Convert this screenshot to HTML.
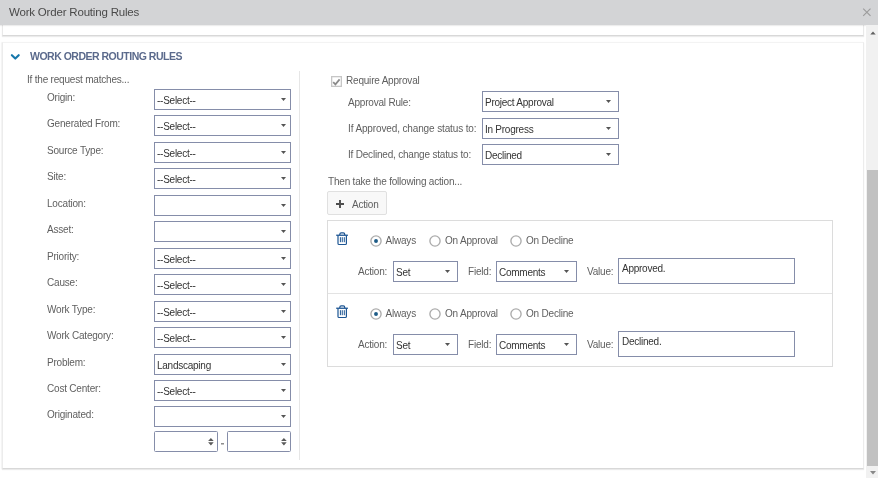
<!DOCTYPE html>
<html><head><meta charset="utf-8"><style>
*{box-sizing:border-box;margin:0;padding:0}
html,body{width:878px;height:478px;overflow:hidden;background:#fff;will-change:transform;font-family:"Liberation Sans",sans-serif;color:#555}
.a{position:absolute;white-space:nowrap;line-height:1}
#hdr{position:absolute;left:0;top:0;width:878px;height:25px;background:#d3d4d6;box-shadow:0 1px 1px rgba(0,0,0,.07)}
#ttl{left:9px;top:7px;font-size:11.5px;color:#4a4a4a;letter-spacing:-0.19px}
#p1{position:absolute;left:2px;top:-10px;width:862px;height:46px;border:1px solid #e9e9e9;border-bottom:1px solid #d8d8d8;background:#fff;box-shadow:0 1px 1px rgba(0,0,0,.08)}
#p2{position:absolute;left:2px;top:42px;width:862px;height:427px;border:1px solid #ececec;border-top-color:#f3f3f3;border-bottom:1px solid #d8d8d8;background:#fff;box-shadow:0 1px 1px rgba(0,0,0,.08),-1px 0 1px rgba(0,0,0,.03)}
#sb{position:absolute;left:866px;top:25px;width:12px;height:453px;background:#f1f1f1}
#thumb{position:absolute;left:867px;top:170px;width:11px;height:296px;background:#c1c1c1}
.lbl{font-size:10px;color:#5f5f5f;letter-spacing:-0.2px}
.sel{position:absolute;height:21px;border:1px solid #858da9;background:#fff}
.sel .t{position:absolute;left:2px;top:6px;font-size:10px;line-height:1;color:#333;letter-spacing:-0.25px;white-space:nowrap}
.sel .ar{position:absolute;right:7px;top:8px;width:5px;height:3px;background:#555;clip-path:polygon(0 0,100% 0,50% 100%)}
.l .ar{right:4px}
.spin{position:absolute;right:4px;top:6px;width:6px;height:8px}
.spin:before{content:"";position:absolute;left:0;top:0;border-left:3px solid transparent;border-right:3px solid transparent;border-bottom:3px solid #666}
.spin:after{content:"";position:absolute;left:0;top:4px;border-left:3px solid transparent;border-right:3px solid transparent;border-top:3px solid #666}
#div{position:absolute;left:299px;top:71px;width:1px;height:389px;background:#e6e6e6}
.box{position:absolute;border:1px solid #dcdcdc;background:#fff}
svg{position:absolute}
</style></head><body>
<div id="p1"></div><div id="hdr"></div>
<div class="a" id="ttl">Work Order Routing Rules</div>
<svg style="left:862px;top:7px" width="10" height="10" viewBox="0 0 10 10"><path d="M1.2 1.6L8.5 8.8M8.5 1.6L1.2 8.8" stroke="#9c9c9c" stroke-width="1.15"/></svg>
<div id="p2"></div><div id="sb"></div><div id="thumb"></div>
<svg style="left:870px;top:31px" width="6" height="4"><path d="M0.3 3.6L3 0.6L5.7 3.6Z" fill="#606060"/></svg>
<svg style="left:870px;top:471px" width="6" height="4"><path d="M0 0L6 0L3 3.5Z" fill="#888"/></svg>
<svg style="left:10px;top:53px" width="10" height="8" viewBox="0 0 10 8"><path d="M1.9 2.2L5.3 5.6L8.7 2.2" stroke="#1677ab" stroke-width="2.1" stroke-linecap="round" stroke-linejoin="round" fill="none"/></svg>
<div class="a" style="left:30px;top:51px;font-size:10.5px;font-weight:bold;color:#5b6a8c;letter-spacing:-0.5px">WORK ORDER ROUTING RULES</div>
<div class="a lbl" style="left:27px;top:75px;">If the request matches...</div>
<div id="div"></div>
<div class="a lbl" style="left:47px;top:93px;">Origin:</div>
<div class="sel l" style="left:154px;top:89px;width:137px;height:21px;"><span class="t">--Select--</span><i class="ar"></i></div>
<div class="a lbl" style="left:47px;top:119px;">Generated From:</div>
<div class="sel l" style="left:154px;top:115px;width:137px;height:21px;"><span class="t">--Select--</span><i class="ar"></i></div>
<div class="a lbl" style="left:47px;top:146px;">Source Type:</div>
<div class="sel l" style="left:154px;top:142px;width:137px;height:21px;"><span class="t">--Select--</span><i class="ar"></i></div>
<div class="a lbl" style="left:47px;top:172px;">Site:</div>
<div class="sel l" style="left:154px;top:168px;width:137px;height:21px;"><span class="t">--Select--</span><i class="ar"></i></div>
<div class="a lbl" style="left:47px;top:199px;">Location:</div>
<div class="sel l" style="left:154px;top:195px;width:137px;height:21px;"><i class="ar"></i></div>
<div class="a lbl" style="left:47px;top:225px;">Asset:</div>
<div class="sel l" style="left:154px;top:221px;width:137px;height:21px;"><i class="ar"></i></div>
<div class="a lbl" style="left:47px;top:252px;">Priority:</div>
<div class="sel l" style="left:154px;top:248px;width:137px;height:21px;"><span class="t">--Select--</span><i class="ar"></i></div>
<div class="a lbl" style="left:47px;top:278px;">Cause:</div>
<div class="sel l" style="left:154px;top:274px;width:137px;height:21px;"><span class="t">--Select--</span><i class="ar"></i></div>
<div class="a lbl" style="left:47px;top:305px;">Work Type:</div>
<div class="sel l" style="left:154px;top:301px;width:137px;height:21px;"><span class="t">--Select--</span><i class="ar"></i></div>
<div class="a lbl" style="left:47px;top:331px;">Work Category:</div>
<div class="sel l" style="left:154px;top:327px;width:137px;height:21px;"><span class="t">--Select--</span><i class="ar"></i></div>
<div class="a lbl" style="left:47px;top:358px;">Problem:</div>
<div class="sel l" style="left:154px;top:354px;width:137px;height:21px;"><span class="t">Landscaping</span><i class="ar"></i></div>
<div class="a lbl" style="left:47px;top:384px;">Cost Center:</div>
<div class="sel l" style="left:154px;top:380px;width:137px;height:21px;"><span class="t">--Select--</span><i class="ar"></i></div>
<div class="a lbl" style="left:47px;top:410px;">Originated:</div>
<div class="sel l" style="left:154px;top:406px;width:137px;height:21px;"><i class="ar"></i></div>
<div class="sel" style="left:154px;top:431px;width:64px;border-radius:1.5px"></div>
<svg style="left:220px;top:440px" width="6" height="6"><path d="M1 3.8H4" stroke="#7a7a7a" stroke-width="1.3"/></svg>
<div class="sel" style="left:227px;top:431px;width:64px;border-radius:1.5px"></div>
<svg style="left:207.7px;top:438px" width="6" height="8" viewBox="0 0 6 8"><path d="M0.1 3.1L2.9 0.1L5.7 3.1ZM0.1 4.3H5.7L2.9 7.4Z" fill="#5a5a5a"/></svg>
<svg style="left:281.2px;top:438px" width="6" height="8" viewBox="0 0 6 8"><path d="M0.1 3.1L2.9 0.1L5.7 3.1ZM0.1 4.3H5.7L2.9 7.4Z" fill="#5a5a5a"/></svg>
<svg style="left:331px;top:76px" width="11" height="11" viewBox="0 0 11 11"><rect x="0.65" y="0.65" width="9.7" height="9.7" fill="#fff" stroke="#c6c6c6" stroke-width="1.3"/><path d="M2.2 6.2L4.4 8.4L8.6 3.4" stroke="#8a8a8a" stroke-width="1.7" fill="none"/></svg>
<div class="a lbl" style="left:346px;top:76px;">Require Approval</div>
<div class="a lbl" style="left:348px;top:98px;">Approval Rule:</div>
<div class="sel r" style="left:482px;top:91px;width:137px;height:21px;"><span class="t">Project Approval</span><i class="ar"></i></div>
<div class="a lbl" style="left:348px;top:124px;letter-spacing:-0.13px">If Approved, change status to:</div>
<div class="sel r" style="left:482px;top:118px;width:137px;height:21px;"><span class="t">In Progress</span><i class="ar"></i></div>
<div class="a lbl" style="left:348px;top:150px;">If Declined, change status to:</div>
<div class="sel r" style="left:482px;top:144px;width:137px;height:21px;"><span class="t">Declined</span><i class="ar"></i></div>
<div class="a lbl" style="left:328px;top:177px;">Then take the following action...</div>
<div style="position:absolute;left:327px;top:191px;width:60px;height:24px;border:1px solid #e0e0e0;border-radius:2px;background:#f8f8f8"></div>
<svg style="left:336px;top:200px" width="8" height="8" viewBox="0 0 8 8"><path d="M4 0V8M0 4H8" stroke="#4d4d4d" stroke-width="1.9"/></svg>
<div class="a lbl" style="left:352px;top:200px;">Action</div>
<div class="box" style="left:327px;top:220px;width:506px;height:147px"></div>
<div style="position:absolute;left:328px;top:293px;width:504px;height:1px;background:#e3e3e3"></div>
<svg style="left:332px;top:229px" width="20" height="20" viewBox="0 0 20 20"><path d="M7.8 6V5.3Q7.8 3.9 9.2 3.9H11.3Q12.7 3.9 12.7 5.3V6" stroke="#1c5593" stroke-width="1.2" fill="none"/><path d="M4.2 6.25H15.9" stroke="#1c5593" stroke-width="1.3"/><path d="M6 6.5V14.4Q6 15.5 7.1 15.5H13.3Q14.4 15.5 14.4 14.4V6.5" stroke="#1c5593" stroke-width="1.2" fill="none"/><path d="M8.4 8.2V13.2M10.25 8.2V13.2M12.3 8.2V13.2" stroke="#1c5593" stroke-width="1"/></svg>
<svg style="left:368.85px;top:234.25px" width="14" height="14" viewBox="0 0 14 14"><circle cx="7" cy="7" r="5.1" fill="#fff" stroke="#ababab" stroke-width="1.35"/><circle cx="7" cy="7" r="1.95" fill="#1d5b87"/></svg>
<div class="a lbl" style="left:385.5px;top:236px;">Always</div>
<svg style="left:427.5px;top:234.25px" width="14" height="14" viewBox="0 0 14 14"><circle cx="7" cy="7" r="5.1" fill="#fff" stroke="#ababab" stroke-width="1.35"/></svg>
<div class="a lbl" style="left:445px;top:236px;">On Approval</div>
<svg style="left:509.20000000000005px;top:234.25px" width="14" height="14" viewBox="0 0 14 14"><circle cx="7" cy="7" r="5.1" fill="#fff" stroke="#ababab" stroke-width="1.35"/></svg>
<div class="a lbl" style="left:526px;top:236px;">On Decline</div>
<div class="a lbl" style="left:358px;top:267px;">Action:</div>
<div class="sel " style="left:393px;top:261px;width:65px;height:21px;"><span class="t">Set</span><i class="ar"></i></div>
<div class="a lbl" style="left:468px;top:267px;">Field:</div>
<div class="sel " style="left:496px;top:261px;width:81px;height:21px;"><span class="t">Comments</span><i class="ar"></i></div>
<div class="a lbl" style="left:587px;top:267px;">Value:</div>
<div class="sel" style="left:618px;top:258px;width:177px;height:26px"><span class="t" style="top:5px;left:3px">Approved.</span></div>
<svg style="left:332px;top:302px" width="20" height="20" viewBox="0 0 20 20"><path d="M7.8 6V5.3Q7.8 3.9 9.2 3.9H11.3Q12.7 3.9 12.7 5.3V6" stroke="#1c5593" stroke-width="1.2" fill="none"/><path d="M4.2 6.25H15.9" stroke="#1c5593" stroke-width="1.3"/><path d="M6 6.5V14.4Q6 15.5 7.1 15.5H13.3Q14.4 15.5 14.4 14.4V6.5" stroke="#1c5593" stroke-width="1.2" fill="none"/><path d="M8.4 8.2V13.2M10.25 8.2V13.2M12.3 8.2V13.2" stroke="#1c5593" stroke-width="1"/></svg>
<svg style="left:368.85px;top:307.25px" width="14" height="14" viewBox="0 0 14 14"><circle cx="7" cy="7" r="5.1" fill="#fff" stroke="#ababab" stroke-width="1.35"/><circle cx="7" cy="7" r="1.95" fill="#1d5b87"/></svg>
<div class="a lbl" style="left:385.5px;top:309px;">Always</div>
<svg style="left:427.5px;top:307.25px" width="14" height="14" viewBox="0 0 14 14"><circle cx="7" cy="7" r="5.1" fill="#fff" stroke="#ababab" stroke-width="1.35"/></svg>
<div class="a lbl" style="left:445px;top:309px;">On Approval</div>
<svg style="left:509.20000000000005px;top:307.25px" width="14" height="14" viewBox="0 0 14 14"><circle cx="7" cy="7" r="5.1" fill="#fff" stroke="#ababab" stroke-width="1.35"/></svg>
<div class="a lbl" style="left:526px;top:309px;">On Decline</div>
<div class="a lbl" style="left:358px;top:340px;">Action:</div>
<div class="sel " style="left:393px;top:334px;width:65px;height:21px;"><span class="t">Set</span><i class="ar"></i></div>
<div class="a lbl" style="left:468px;top:340px;">Field:</div>
<div class="sel " style="left:496px;top:334px;width:81px;height:21px;"><span class="t">Comments</span><i class="ar"></i></div>
<div class="a lbl" style="left:587px;top:340px;">Value:</div>
<div class="sel" style="left:618px;top:331px;width:177px;height:26px"><span class="t" style="top:5px;left:3px">Declined.</span></div>
</body></html>
